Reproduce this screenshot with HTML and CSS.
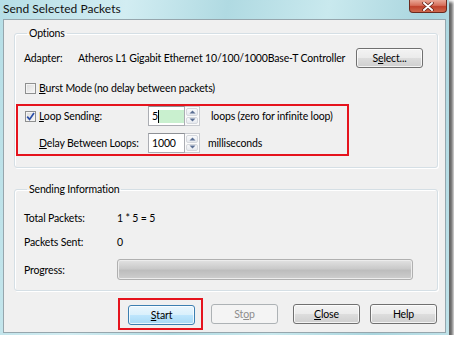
FILE: index.html
```html
<!DOCTYPE html>
<html>
<head>
<meta charset="utf-8">
<link rel="stylesheet" href="styles.css">
</head>
<body>
<div class="window">
  <div class="titlebar">
    <span class="title">Send Selected Packets</span>
    <span class="close-btn"><svg width="14" height="9" viewBox="0 0 14 9"><path d="M3 1 L11 8 M11 1 L3 8" stroke="#5b1b12" stroke-width="3.4" stroke-linecap="round"/><path d="M3 1 L11 8 M11 1 L3 8" stroke="#ffffff" stroke-width="2" stroke-linecap="round"/></svg></span>
  </div>
  <div class="client">
    <fieldset class="group options">
      <legend>Options</legend>
      <div class="adapter-row">
        <span class="adapter-lbl">Adapter:</span>
        <span class="adapter-val">Atheros L1 Gigabit Ethernet 10/100/1000Base-T Controller</span>
        <span class="btn select-btn">S<u>e</u>lect...</span>
      </div>
      <div class="check-row burst-row">
        <span class="cb"></span>
        <span><u>B</u>urst Mode (no delay between packets)</span>
      </div>
      <div class="annot loop-box">
        <div class="loop-row">
          <span class="cb checked"><svg width="9" height="9" viewBox="0 0 9 9"><path d="M1.2 4.6 L3.6 7.4 L8 1" fill="none" stroke="#2a4ea8" stroke-width="1.7"/></svg></span>
          <span class="loop-lbl"><u>L</u>oop Sending:</span>
          <span class="spin">
            <span class="edit"><span class="edit-text">5</span><span class="caret"></span><span class="sel"></span></span>
            <span class="spin-btns">
              <span class="sb"><svg width="7" height="4" viewBox="0 0 7 4"><path d="M0.5 3.5 L3.5 0.5 L6.5 3.5 Z" fill="#5a6f93"/></svg></span>
              <span class="sb"><svg width="7" height="4" viewBox="0 0 7 4"><path d="M0.5 0.5 L3.5 3.5 L6.5 0.5 Z" fill="#5a6f93"/></svg></span>
            </span>
          </span>
          <span class="unit">loops (zero for infinite loop)</span>
        </div>
        <div class="loop-row delay-row">
          <span class="cb-slot"></span>
          <span class="loop-lbl"><u>D</u>elay Between Loops:</span>
          <span class="spin">
            <span class="edit"><span class="edit-text">1000</span></span>
            <span class="spin-btns">
              <span class="sb"><svg width="7" height="4" viewBox="0 0 7 4"><path d="M0.5 3.5 L3.5 0.5 L6.5 3.5 Z" fill="#5a6f93"/></svg></span>
              <span class="sb"><svg width="7" height="4" viewBox="0 0 7 4"><path d="M0.5 0.5 L3.5 3.5 L6.5 0.5 Z" fill="#5a6f93"/></svg></span>
            </span>
          </span>
          <span class="unit unit2">milliseconds</span>
        </div>
      </div>
    </fieldset>
    <fieldset class="group sending">
      <legend>Sending Information</legend>
      <div class="info-row first">
        <span class="info-lbl">Total Packets:</span>
        <span>1 * 5 = 5</span>
      </div>
      <div class="info-row">
        <span class="info-lbl">Packets Sent:</span>
        <span>0</span>
      </div>
      <div class="info-row prog-row">
        <span class="info-lbl">Progress:</span>
        <span class="progress"></span>
      </div>
    </fieldset>
    <div class="button-row">
      <span class="annot start-box"><span class="btn default"><u>S</u>tart</span></span>
      <span class="btn disabled stop">St<u>o</u>p</span>
      <span class="btn close"><u>C</u>lose</span>
      <span class="btn help">Help</span>
    </div>
  </div>
</div>
</body>
</html>
```
FILE: styles.css
```css
html, body {
  margin: 0;
  padding: 0;
  background: #ffffff;
}
body {
  font-family: Lato, "Noto Sans", sans-serif;
  font-size: 10.5px;
  letter-spacing: -0.15px;
  color: #000;
  white-space: nowrap;
}
.window {
  width: 449px;
  height: 335px;
  box-sizing: border-box;
  display: flex;
  flex-direction: column;
  background: linear-gradient(100deg, #b6dee6 0%, #d2edf2 25%, #b0dae2 45%, #c9e9ee 65%, #a9d5de 85%, #bfe2e9 100%);
  box-shadow: 3px 3px 3px 1px rgba(50, 50, 50, 0.75);
}
.titlebar {
  height: 19px;
  display: flex;
  justify-content: space-between;
  align-items: flex-start;
  flex-shrink: 0;
}
.title {
  font-size: 12px;
  letter-spacing: 0;
  line-height: 17px;
  padding-left: 3px;
  color: #111;
}
.close-btn {
  width: 38px;
  height: 13px;
  margin-right: 2px;
  box-sizing: border-box;
  border: 1px solid #6b2a1e;
  border-top: none;
  border-radius: 0 0 4px 4px;
  background: linear-gradient(#e9a897 0%, #d66f5a 45%, #c0422c 55%, #cf6a4e 100%);
  display: flex;
  align-items: center;
  justify-content: center;
}
.client {
  flex: 1;
  margin: 0 3px 2px 3px;
  background: #f0f0f0;
  border: 1px solid #96a6ad;
  padding: 0 7px 0 10px;
  display: flex;
  flex-direction: column;
}
.group {
  margin: 0;
  border: 1px solid #d5dfe5;
  border-radius: 3px;
  box-shadow: inset 1px 1px 0 #ffffff, 1px 1px 0 #ffffff;
  padding: 0 14px 0 9px;
}
.group legend {
  padding: 0 2px;
  margin-left: 3px;
  line-height: 12px;
  font-size: 10.5px;
}
.options {
  margin-top: 7px;
  padding-top: 9px;
  padding-bottom: 11px;
}
.adapter-row {
  height: 20px;
  display: flex;
  align-items: center;
}
.adapter-lbl {
  width: 54px;
}
.select-btn {
  margin-left: auto;
}
.check-row {
  display: flex;
  align-items: center;
  height: 14px;
}
.burst-row {
  margin-top: 13px;
  margin-left: 1px;
}
.cb {
  width: 11px;
  height: 11px;
  box-sizing: border-box;
  border: 1px solid #8e8f8f;
  background: linear-gradient(135deg, #dcdcdc, #f6f6f6);
  box-shadow: inset 0 0 0 1px #f4f4f4;
  margin-right: 3px;
  display: flex;
  align-items: center;
  justify-content: center;
  flex-shrink: 0;
}
.cb-slot {
  width: 14px;
  flex-shrink: 0;
}
.annot {
  border: 2px solid #e5131d;
  box-sizing: border-box;
}
.loop-box {
  margin-top: 9px;
  margin-left: -8px;
  width: 333px;
  padding: 0 0 1px 7px;
}
.loop-row {
  height: 20px;
  display: flex;
  align-items: center;
}
.delay-row {
  margin-top: 7px;
}
.loop-lbl {
  width: 109px;
}
.spin {
  display: flex;
  height: 20px;
  width: 52px;
}
.edit {
  width: 37px;
  height: 20px;
  box-sizing: border-box;
  border: 1px solid #abadb3;
  border-top-color: #8d9095;
  background: #fff;
  display: flex;
  align-items: center;
  padding-left: 3px;
  position: relative;
}
.caret {
  width: 1px;
  height: 13px;
  background: #000;
}
.sel {
  width: 28px;
  height: 13px;
  background: #c9f0cf;
}
.spin-btns {
  width: 15px;
  height: 20px;
  display: flex;
  flex-direction: column;
  box-sizing: border-box;
  border: 1px solid #c9cbd0;
  border-left: none;
  background: #fbfbfb;
}
.sb {
  flex: 1;
  display: flex;
  align-items: center;
  justify-content: center;
  margin: 1px 1px 0 1px;
  border: 1px solid #d5d8dd;
  border-radius: 2px;
  background: linear-gradient(#f8f9fb, #e6e9ee);
}
.sb + .sb {
  margin-bottom: 1px;
}
.unit {
  margin-left: 11px;
}
.unit2 {
  margin-left: 8px;
}
.sending {
  margin-top: 15px;
  padding-top: 16px;
  padding-right: 24px;
  padding-bottom: 10px;
}
.info-row {
  display: flex;
  align-items: center;
  height: 14px;
  margin-top: 10px;
}
.info-row.first {
  margin-top: 0;
}
.info-lbl {
  width: 93px;
}
.prog-row {
  height: 21px;
}
.progress {
  flex: 1;
  height: 21px;
  box-sizing: border-box;
  border: 1px solid #b0b0b0;
  border-radius: 3px;
  background: linear-gradient(#e2e2e2 0%, #cacaca 45%, #bdbdbd 55%, #cecece 100%);
  box-shadow: inset 0 0 0 1px #ececec;
}
.button-row {
  margin-top: 7px;
  display: flex;
  justify-content: flex-end;
  align-items: center;
}
.start-box {
  padding: 5px 6px 3px 8px;
  display: flex;
}
.btn {
  width: 67px;
  height: 20px;
  box-sizing: border-box;
  border: 1px solid #707070;
  border-radius: 3px;
  background: linear-gradient(#f3f3f3 0%, #ebebeb 49%, #dddddd 50%, #cfcfcf 100%);
  box-shadow: inset 0 0 0 1px rgba(255, 255, 255, 0.75);
  display: flex;
  align-items: center;
  justify-content: center;
  flex-shrink: 0;
}
.btn.default {
  border-color: #3c7fb1;
  background: linear-gradient(#eaf6fd 0%, #d9f0fc 49%, #bee6fd 50%, #a7d9f5 100%);
}
.btn.disabled {
  border-color: #adb2b5;
  background: #f4f4f4;
  color: #8d8d8d;
  box-shadow: none;
}
.stop {
  margin-left: 8px;
}
.close {
  margin-left: 15px;
}
.help {
  margin-left: 10px;
  margin-right: 1px;
}
```
